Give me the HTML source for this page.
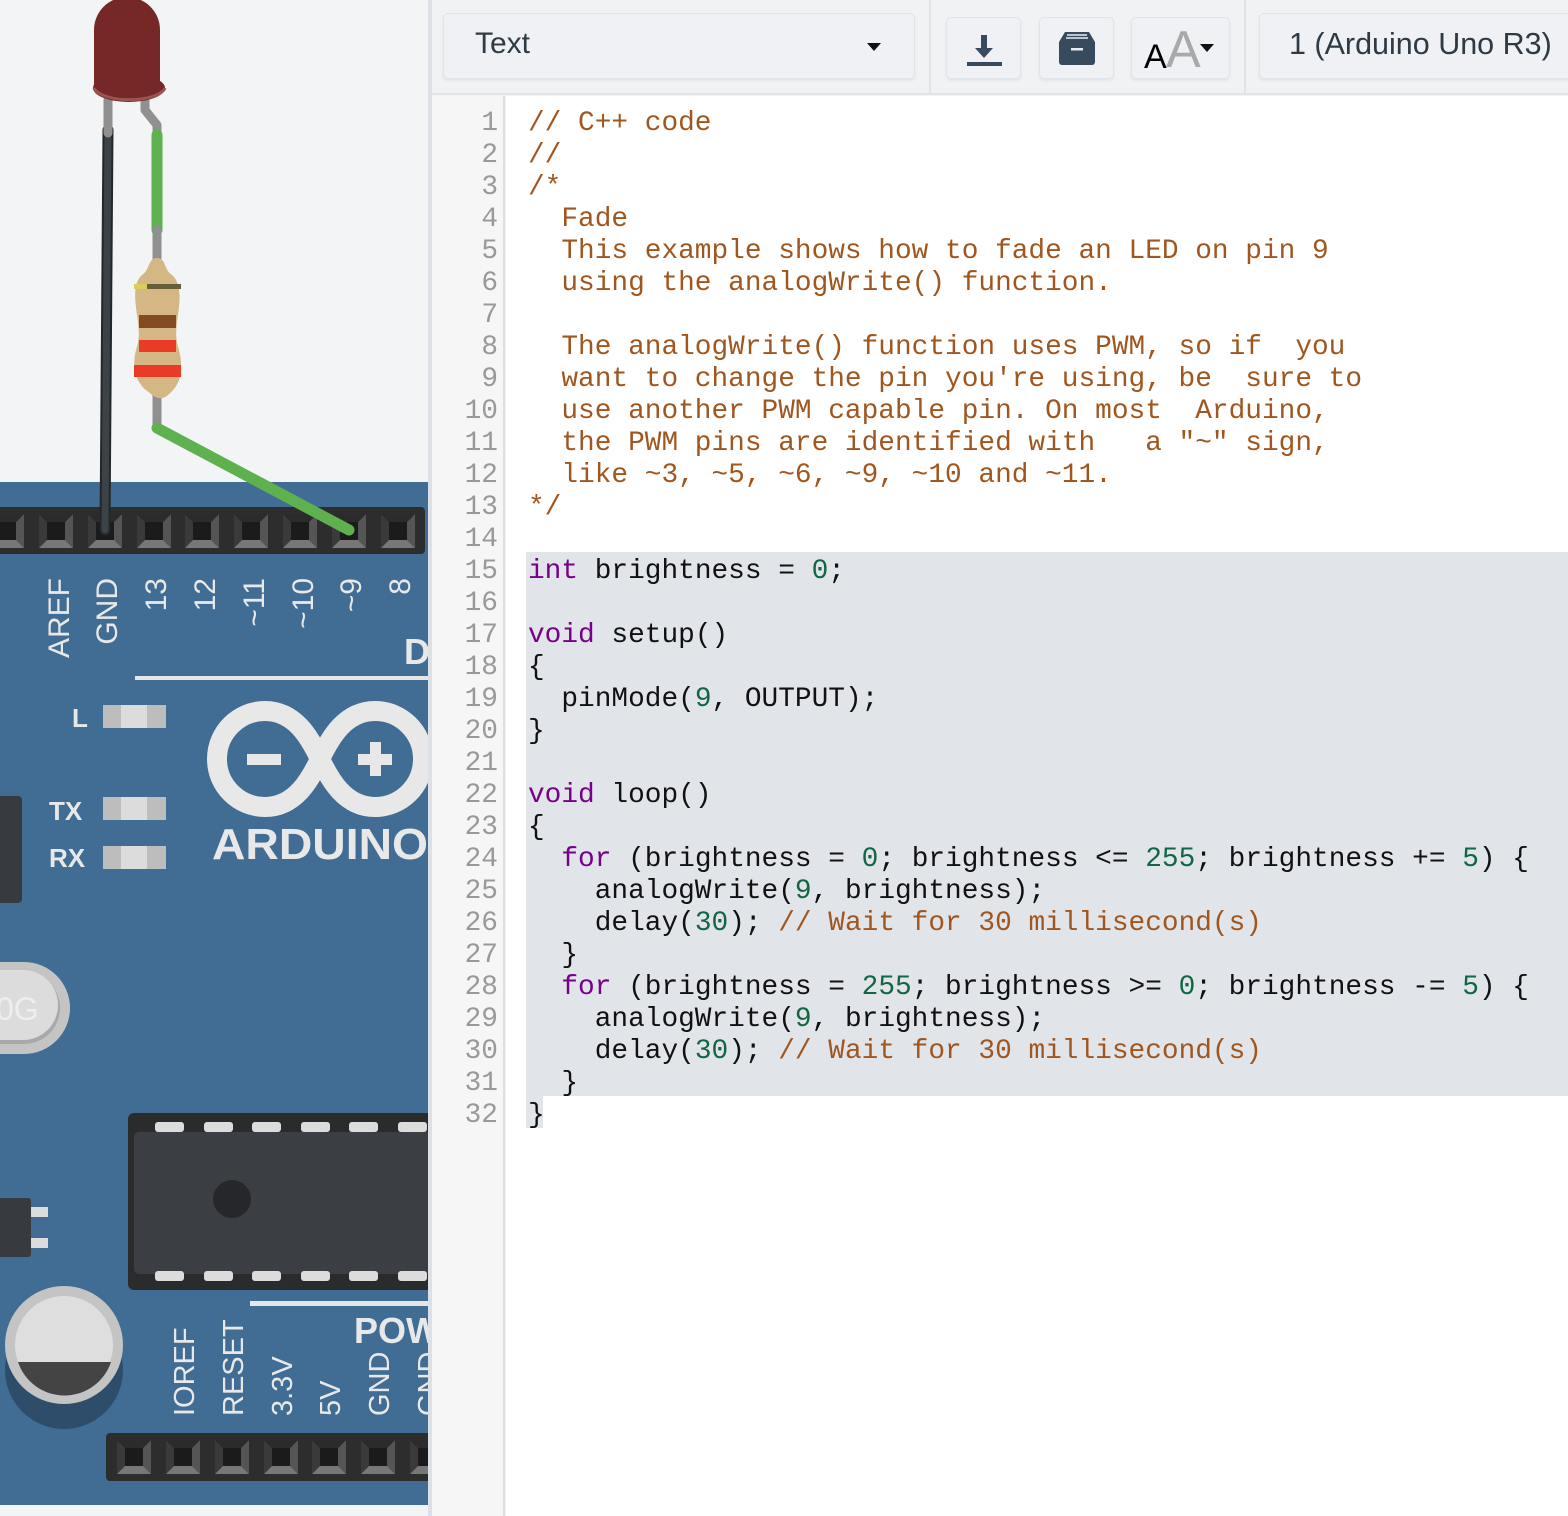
<!DOCTYPE html>
<html><head><meta charset="utf-8"><style>
*{margin:0;padding:0;box-sizing:border-box}
body{width:1568px;height:1516px;overflow:hidden;background:#f3f4f6;position:relative;font-family:"Liberation Sans",sans-serif}
#left{position:absolute;left:0;top:0;width:428px;height:1516px}
#div{position:absolute;left:428px;top:0;width:4px;height:1516px;background:#dde0e5}
#tb{position:absolute;left:432px;top:0;width:1136px;height:95px;background:#f1f2f4;border-bottom:2px solid #e1e3e8}
.box{position:absolute;background:#f0f1f4;border:1.5px solid #e0e3e8;border-radius:5px;box-shadow:0 2px 3px rgba(0,0,0,.06)}
.sep{position:absolute;top:0;width:1.5px;height:95px;background:#e1e3e8}
#gut{position:absolute;left:432px;top:96px;width:73px;height:1420px;background:#f6f6f6;border-right:2px solid #dedede}
#ed{position:absolute;left:506px;top:96px;width:1062px;height:1420px;background:#fff}
pre{position:absolute;font-family:"Liberation Mono",monospace;font-size:27.8px;line-height:32px;white-space:pre}
#nums{left:432px;top:108px;width:66px;text-align:right;color:#999}
#code{left:528px;top:108px;color:#111}
.c{color:#a0561f}.k{color:#770088}.n{color:#116644}
#hl{position:absolute;left:526px;top:552px;width:1042px;height:544px;background:#e1e4e9}
#hl2{position:absolute;left:526px;top:1096px;width:17px;height:32px;background:#e1e4e9}
</style></head><body>
<svg id="left" width="428" height="1516" viewBox="0 0 428 1516">
<defs>
<g id="pin"><rect width="34" height="34" fill="#1b1b1b"/><polygon points="0,0 8,8 8,26 0,34" fill="#3a3a3a"/><polygon points="34,0 26,8 26,26 34,34" fill="#555"/><polygon points="0,34 8,26 26,26 34,34" fill="#777"/><polygon points="0,0 34,0 26,8 8,8" fill="#2b2b2b"/></g>
</defs>
<rect x="0" y="482" width="428" height="1023" fill="#416c94"/>
<rect x="-10" y="507" width="435" height="47" rx="4" fill="#2d2d2d"/>
<use href="#pin" x="-10" y="514"/><use href="#pin" x="39" y="514"/><use href="#pin" x="88" y="514"/><use href="#pin" x="137" y="514"/><use href="#pin" x="185" y="514"/><use href="#pin" x="234" y="514"/><use href="#pin" x="283" y="514"/><use href="#pin" x="332" y="514"/><use href="#pin" x="381" y="514"/>
<path d="M108 130 L105 530" stroke="#23272a" stroke-width="11" stroke-linecap="round"/>
<path d="M108 130 L105 530" stroke="#3c4245" stroke-width="7" stroke-linecap="round"/>
<path d="M108 100 L108 133" stroke="#909090" stroke-width="9" stroke-linecap="round"/>
<path d="M145 100 L145 110 L157 125 L157 135" stroke="#909090" stroke-width="9" fill="none" stroke-linecap="round" stroke-linejoin="round"/>
<path d="M157 135 L157 230" stroke="#5fb04f" stroke-width="11" stroke-linecap="round"/>
<path d="M157 230 L157 265 M157 395 L157 428" stroke="#909090" stroke-width="9" stroke-linecap="round"/>
<path d="M157 428 L349 530" stroke="#5fb04f" stroke-width="11" stroke-linecap="round"/>
<path d="M94 30 A33 33 0 0 1 160 30 L160 85 L94 85 Z" fill="#752826"/>
<ellipse cx="129" cy="88" rx="36" ry="14" fill="#752826"/>
<path d="M94 88 A36 14 0 0 0 165 88" stroke="#9a5552" stroke-width="3" fill="none"/>
<path d="M157 258 C148 258 150 270 142 275 C134 282 134 295 137 315 C140 335 139 340 136 350 C131 370 137 385 150 393 C157 400 164 400 170 393 C180 385 184 370 179 350 C176 340 175 335 178 315 C181 295 180 282 172 275 C164 270 166 258 157 258 Z" fill="#d4b785"/>
<rect x="134" y="284" width="47" height="5" fill="#675e3a"/><rect x="134" y="284" width="13" height="5" fill="#d6cf5a"/>
<rect x="139" y="315" width="37" height="13" fill="#844a20"/>
<rect x="139" y="340" width="37" height="12" fill="#e93b26"/>
<rect x="134" y="365" width="47" height="12" fill="#e93b26"/>
<g fill="#e8e8e8" font-size="30" font-family="Liberation Sans,sans-serif" text-anchor="end">
<text transform="translate(69,578) rotate(-90)">AREF</text>
<text transform="translate(117,578) rotate(-90)">GND</text>
<text transform="translate(166,578) rotate(-90)">13</text>
<text transform="translate(215,578) rotate(-90)">12</text>
<text transform="translate(264,578) rotate(-90)">~11</text>
<text transform="translate(313,578) rotate(-90)">~10</text>
<text transform="translate(361,578) rotate(-90)">~9</text>
<text transform="translate(410,578) rotate(-90)">8</text>
</g>
<text x="404" y="664" fill="#e8e8e8" font-size="36" font-weight="bold">D</text>
<rect x="135" y="676" width="293" height="4" fill="#e6e6e6"/>
<g fill="#e8e8e8" font-size="26" font-weight="bold">
<text x="72" y="727">L</text><text x="49" y="820">TX</text><text x="49" y="867">RX</text></g>
<g><rect x="103" y="705" width="63" height="23" fill="#bdbdbd"/><rect x="121" y="705" width="26" height="23" fill="#dcdcdc"/>
<rect x="103" y="797" width="63" height="23" fill="#bdbdbd"/><rect x="121" y="797" width="26" height="23" fill="#dcdcdc"/>
<rect x="103" y="846" width="63" height="23" fill="#bdbdbd"/><rect x="121" y="846" width="26" height="23" fill="#dcdcdc"/></g>
<path d="M265 711 C239 711 217 732 217 759 C217 786 239 807 265 807 C295 807 310 780 320 759 C330 738 345 711 375 711 C401 711 423 732 423 759 C423 786 401 807 375 807 C345 807 330 780 320 759 C310 738 295 711 265 711 Z" fill="none" stroke="#e8e8e8" stroke-width="20"/>
<rect x="247" y="754" width="34" height="11" fill="#e8e8e8"/>
<rect x="358" y="754" width="34" height="11" fill="#e8e8e8"/><rect x="370" y="742" width="11" height="34" fill="#e8e8e8"/>
<text x="212" y="859" fill="#e8e8e8" font-size="44" font-weight="bold" font-family="Liberation Sans,sans-serif" textLength="216" lengthAdjust="spacingAndGlyphs">ARDUINO</text>
<rect x="-10" y="796" width="32" height="107" rx="4" fill="#373b3f"/>
<rect x="-60" y="962" width="130" height="92" rx="46" fill="#c4c4c4"/>
<rect x="-60" y="972" width="120" height="72" rx="36" fill="#a9a9a9"/>
<rect x="-60" y="970" width="118" height="70" rx="35" fill="#dcdcdc"/>
<text x="-4" y="1020" fill="#eeeeee" font-size="32" font-family="Liberation Sans Narrow,Liberation Sans,sans-serif">0G</text>
<rect x="128" y="1113" width="310" height="177" rx="6" fill="#2a2b2d"/>
<rect x="134" y="1132" width="300" height="142" rx="5" fill="#3b3e42"/>
<circle cx="232" cy="1199" r="19" fill="#25272a"/>
<g fill="#dcdcdc">
<rect x="155" y="1122" width="29" height="10" rx="3"/><rect x="204" y="1122" width="29" height="10" rx="3"/><rect x="252" y="1122" width="29" height="10" rx="3"/><rect x="301" y="1122" width="29" height="10" rx="3"/><rect x="349" y="1122" width="29" height="10" rx="3"/><rect x="398" y="1122" width="29" height="10" rx="3"/>
<rect x="155" y="1271" width="29" height="10" rx="3"/><rect x="204" y="1271" width="29" height="10" rx="3"/><rect x="252" y="1271" width="29" height="10" rx="3"/><rect x="301" y="1271" width="29" height="10" rx="3"/><rect x="349" y="1271" width="29" height="10" rx="3"/><rect x="398" y="1271" width="29" height="10" rx="3"/></g>
<rect x="-5" y="1198" width="36" height="59" rx="3" fill="#373b3f"/>
<rect x="31" y="1207" width="17" height="10" fill="#dcdcdc"/><rect x="31" y="1238" width="17" height="10" fill="#dcdcdc"/>
<circle cx="64" cy="1370" r="59" fill="#2d4d6b"/>
<circle cx="64" cy="1345" r="59" fill="#c4c4c4"/>
<circle cx="64" cy="1345" r="49" fill="#dedede"/>
<path d="M18 1362 L111 1362 A49 49 0 0 1 18 1362 Z" fill="#444"/>
<rect x="250" y="1301" width="178" height="5" fill="#e6e6e6"/>
<text x="354" y="1343" fill="#e8e8e8" font-size="36" font-weight="bold">POW</text>
<g fill="#e8e8e8" font-size="29">
<text transform="translate(194,1416) rotate(-90)">IOREF</text>
<text transform="translate(243,1416) rotate(-90)">RESET</text>
<text transform="translate(292,1416) rotate(-90)">3.3V</text>
<text transform="translate(340,1416) rotate(-90)">5V</text>
<text transform="translate(389,1416) rotate(-90)">GND</text>
<text transform="translate(438,1416) rotate(-90)">GND</text></g>
<rect x="106" y="1433" width="330" height="48" rx="4" fill="#2d2d2d"/>
<use href="#pin" x="117" y="1440"/><use href="#pin" x="166" y="1440"/><use href="#pin" x="215" y="1440"/><use href="#pin" x="264" y="1440"/><use href="#pin" x="312" y="1440"/><use href="#pin" x="361" y="1440"/><use href="#pin" x="410" y="1440"/>
</svg>
<div id="div"></div>
<div id="tb">
<div class="box" style="left:11px;top:13px;width:472px;height:66px"></div>
<div style="position:absolute;left:43px;top:27px;font-size:30px;color:#2e3a44">Text</div>
<div style="position:absolute;left:435px;top:43px;width:0;height:0;border-left:7px solid transparent;border-right:7px solid transparent;border-top:8px solid #111"></div>
<div class="sep" style="left:497px"></div>
<div class="box" style="left:514px;top:17px;width:75px;height:62px"></div>
<svg style="position:absolute;left:532px;top:33px" width="40" height="34" viewBox="0 0 40 34"><path d="M17 2 h6 v13 h6 l-9 10 l-9 -10 h6 Z" fill="#374a5e"/><rect x="3" y="29" width="35" height="4" fill="#374a5e"/></svg>
<div class="box" style="left:607px;top:17px;width:75px;height:62px"></div>
<svg style="position:absolute;left:626px;top:30px" width="38" height="36" viewBox="0 0 38 36"><path d="M7 2 h24 l6 10 v20 a3 3 0 0 1 -3 3 h-30 a3 3 0 0 1 -3 -3 v-20 Z" fill="#374a5e"/><path d="M9 5 h20 M8 8 h22" stroke="#e8ebef" stroke-width="1.6"/><rect x="13" y="18" width="12" height="2.5" fill="#e8ebef"/></svg>
<div class="box" style="left:699px;top:17px;width:99px;height:62px"></div>
<div style="position:absolute;left:734px;top:24px;font-size:52px;color:#a9a9a9;line-height:1">A</div>
<div style="position:absolute;left:712px;top:40px;font-size:34px;color:#000;line-height:1">A</div>
<div style="position:absolute;left:768px;top:44px;width:0;height:0;border-left:7px solid transparent;border-right:7px solid transparent;border-top:8px solid #111"></div>
<div class="sep" style="left:812px"></div>
<div class="box" style="left:827px;top:13px;width:330px;height:66px"></div>
<div style="position:absolute;left:857px;top:27px;font-size:30.5px;color:#2e3a44">1 (Arduino Uno R3)</div>
</div>
<div id="gut"></div>
<div id="ed"></div>
<div id="hl"></div><div id="hl2"></div>
<pre id="nums">1
2
3
4
5
6
7
8
9
10
11
12
13
14
15
16
17
18
19
20
21
22
23
24
25
26
27
28
29
30
31
32</pre>
<pre id="code"><span class="c">// C++ code
//
/*
  Fade
  This example shows how to fade an LED on pin 9
  using the analogWrite() function.

  The analogWrite() function uses PWM, so if  you
  want to change the pin you're using, be  sure to
  use another PWM capable pin. On most  Arduino,
  the PWM pins are identified with   a "~" sign,
  like ~3, ~5, ~6, ~9, ~10 and ~11.
*/</span>

<span class="k">int</span> brightness = <span class="n">0</span>;

<span class="k">void</span> setup()
{
  pinMode(<span class="n">9</span>, OUTPUT);
}

<span class="k">void</span> loop()
{
  <span class="k">for</span> (brightness = <span class="n">0</span>; brightness &lt;= <span class="n">255</span>; brightness += <span class="n">5</span>) {
    analogWrite(<span class="n">9</span>, brightness);
    delay(<span class="n">30</span>); <span class="c">// Wait for 30 millisecond(s)</span>
  }
  <span class="k">for</span> (brightness = <span class="n">255</span>; brightness &gt;= <span class="n">0</span>; brightness -= <span class="n">5</span>) {
    analogWrite(<span class="n">9</span>, brightness);
    delay(<span class="n">30</span>); <span class="c">// Wait for 30 millisecond(s)</span>
  }
}</pre>
</body></html>
